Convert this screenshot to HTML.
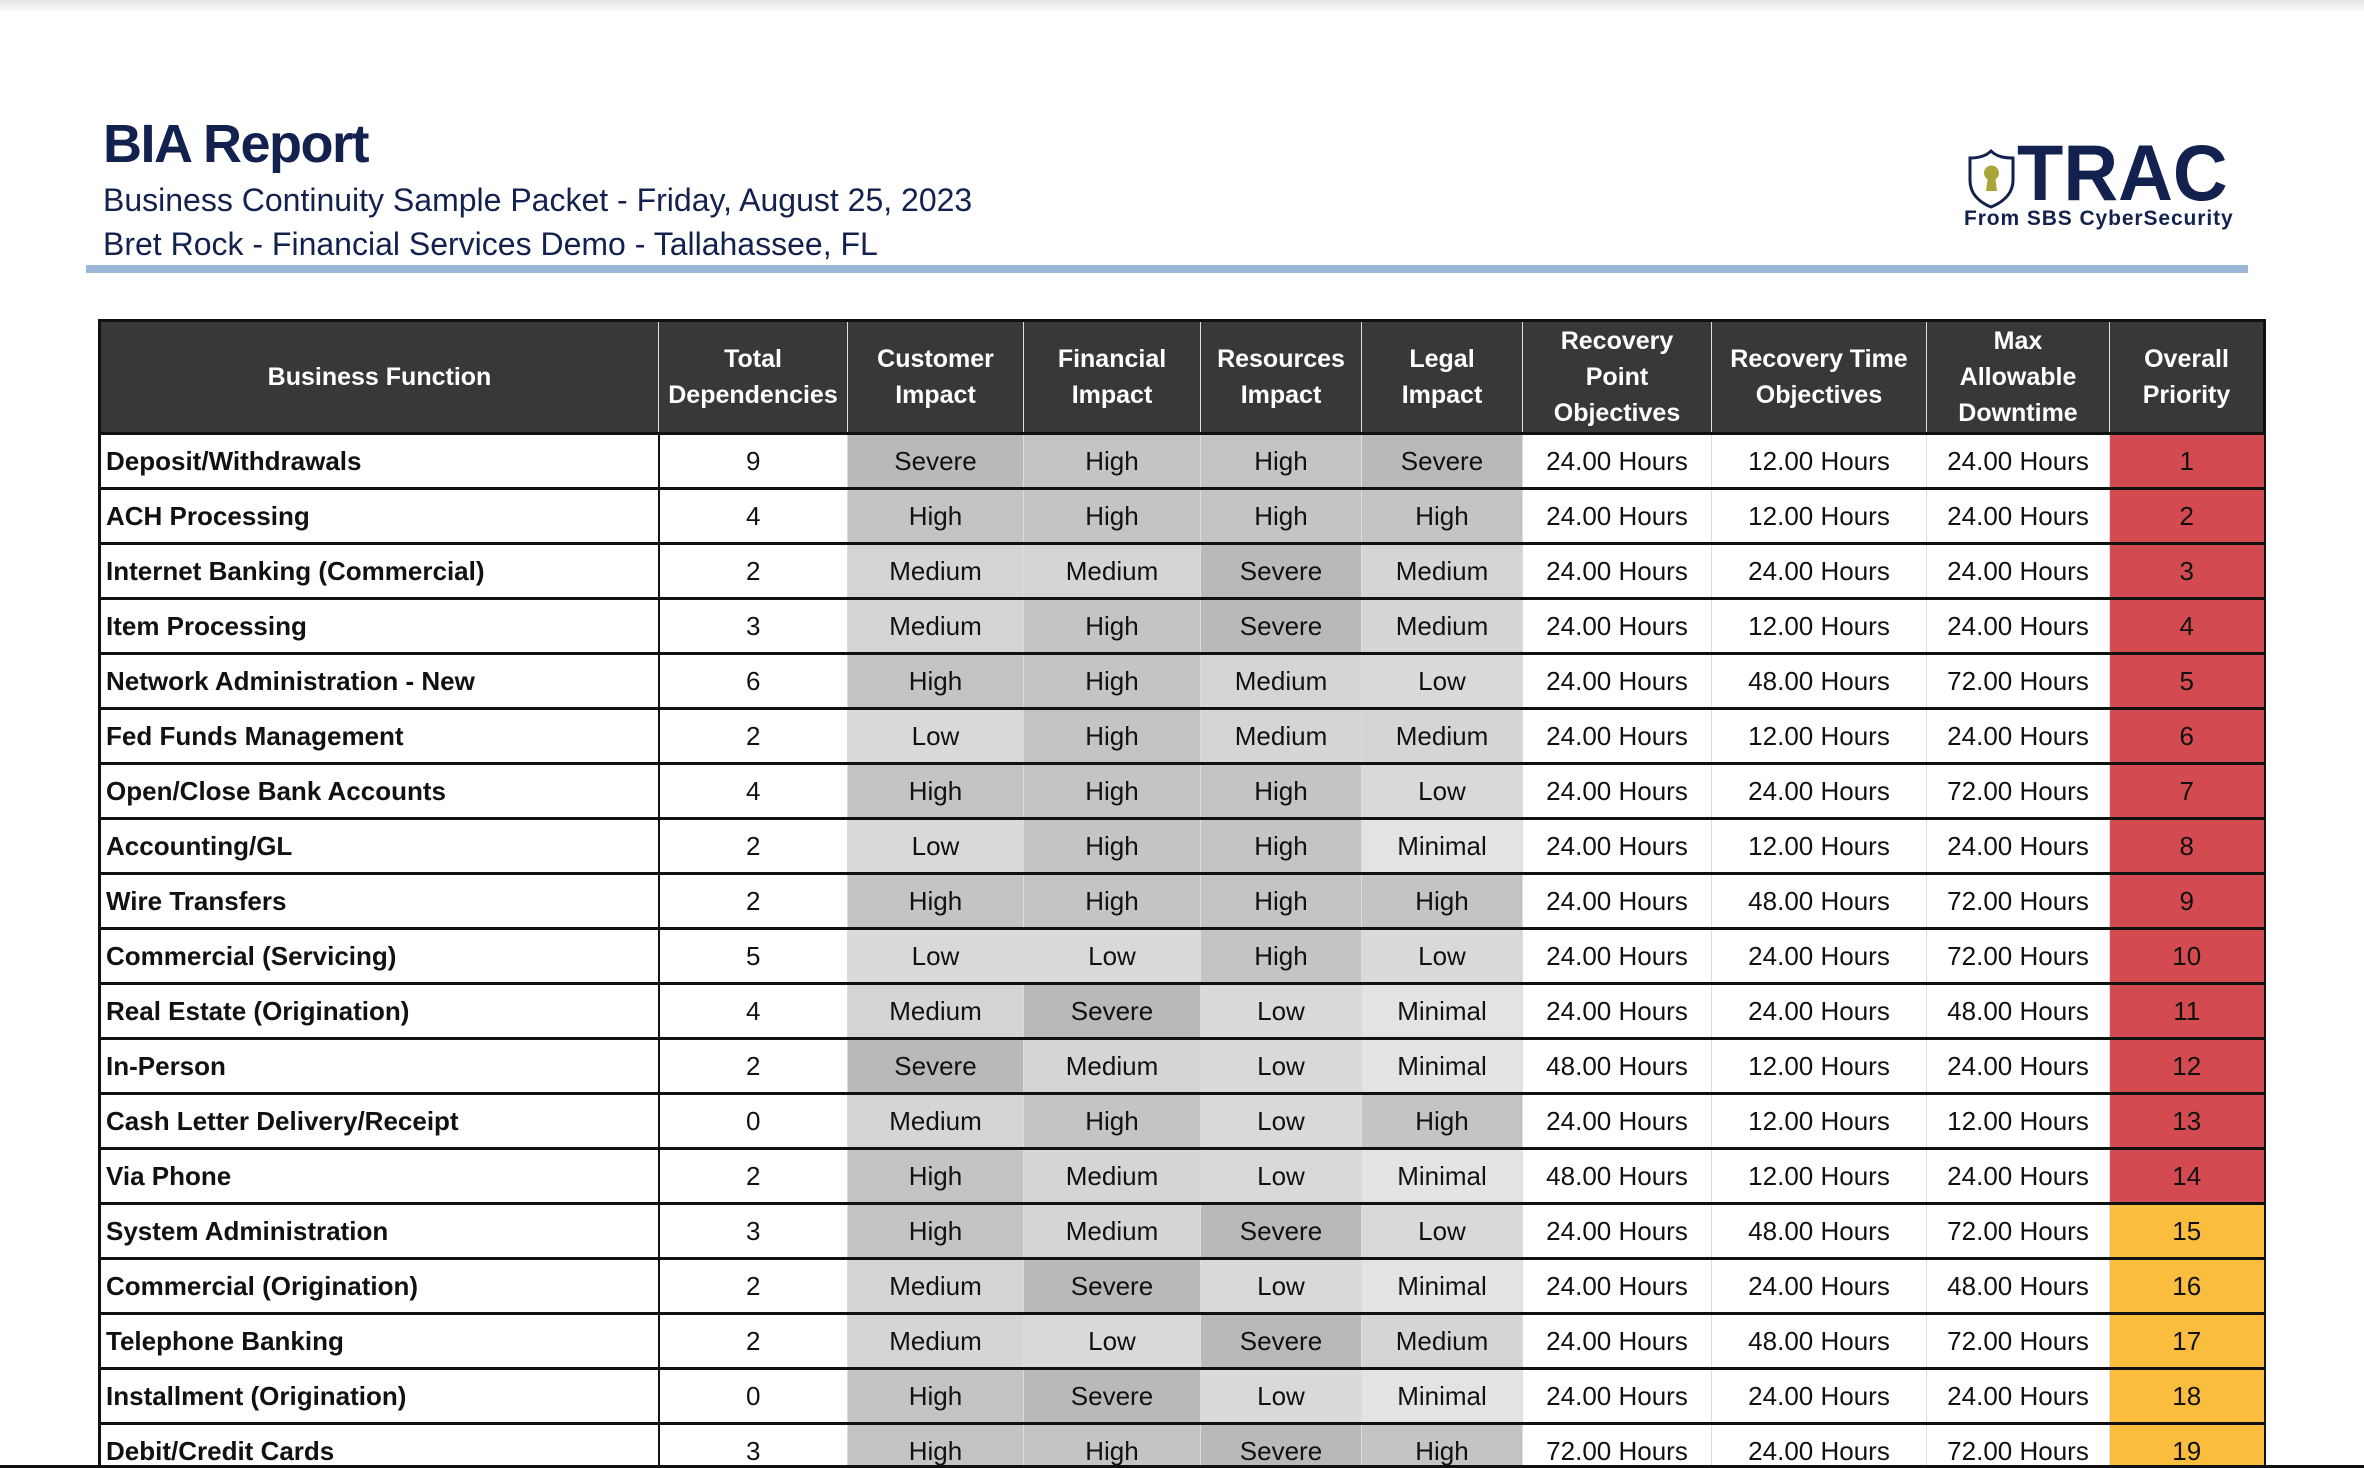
<!DOCTYPE html>
<html><head><meta charset="utf-8"><style>
html{margin:0;padding:0;width:2364px;height:1468px;overflow:hidden;}
body{margin:0;padding:0;width:2364px;height:1468px;overflow:hidden;background:#fff;position:relative;font-family:"Liberation Sans",sans-serif;}
.topsh{position:absolute;left:0;top:0;width:2364px;height:12px;background:linear-gradient(#e2e2e2,#fff);}
.t1{position:absolute;left:103px;top:117px;font-size:54px;font-weight:bold;color:#13214f;letter-spacing:-1.5px;line-height:1;}
.t2{position:absolute;left:103px;font-size:32px;color:#13214f;line-height:1;white-space:nowrap;}
.bar{position:absolute;left:86px;top:265px;width:2162px;height:8px;background:#9bb8d6;}
.logo{position:absolute;left:1967px;top:140px;}
.trac{position:absolute;left:2017px;top:133px;font-size:79px;font-weight:bold;color:#13214f;line-height:1;letter-spacing:0px;transform:scaleX(0.96);transform-origin:left top;}
.from{position:absolute;left:1964px;top:207px;font-size:21px;font-weight:bold;color:#13214f;letter-spacing:0.9px;white-space:nowrap;}
table{position:absolute;left:98px;top:319px;border-collapse:collapse;table-layout:fixed;width:2165px;font-size:26px;}
th{background:#383838;color:#fff;font-weight:bold;height:110px;border-left:1px solid #ddd;line-height:36px;padding:0 2px;font-size:25px;}
th:first-child{border-left:none}
thead tr{border:3px solid #111;}
td{height:52px;text-align:center;padding:0;border-left:1px solid #ddd;border-bottom:3px solid #111;white-space:nowrap;color:#111;}
td:first-child{text-align:left;font-weight:bold;padding-left:5px;border-left:3px solid #111;border-right:2px solid #111;}
td:last-child{border-right:2px solid #111;}
.S{background:#b9b9b9}.H{background:#c4c4c4}.M{background:#d5d5d5}.L{background:#d9d9d9}.N{background:#e3e3e3}
.r{background:#d34b50}.o{background:#fbbd3d}
.btm{position:absolute;left:0;top:1465px;width:2364px;height:3px;background:#111;}
</style></head><body>
<div class="topsh"></div>
<div class="t1">BIA Report</div>
<div class="t2" style="top:184px">Business Continuity Sample Packet - Friday, August 25, 2023</div>
<div class="t2" style="top:228px">Bret Rock - Financial Services Demo - Tallahassee, FL</div>
<div class="bar"></div>
<svg class="logo" width="52" height="70" viewBox="0 0 52 70">
<path d="M24 11 C18 17 10 18 3 18 L3 40 C3 55 14 63 24 67 C34 63 46 55 46 40 L46 18 C38 18 30 17 24 11 Z" fill="none" stroke="#13214f" stroke-width="3"/>
<circle cx="24.5" cy="33" r="7.5" fill="#aaa537"/>
<path d="M21 36 L28 36 L30 51 L19 51 Z" fill="#aaa537"/>
</svg>
<div class="trac">TRAC</div>
<div class="from">From SBS CyberSecurity</div>
<table>
<colgroup><col style="width:559px"><col style="width:189px"><col style="width:176px"><col style="width:177px"><col style="width:161px"><col style="width:161px"><col style="width:189px"><col style="width:215px"><col style="width:183px"><col style="width:155px"></colgroup>
<thead><tr><th>Business Function</th><th>Total<br>Dependencies</th><th>Customer<br>Impact</th><th>Financial<br>Impact</th><th>Resources<br>Impact</th><th>Legal<br>Impact</th><th>Recovery<br>Point<br>Objectives</th><th>Recovery Time<br>Objectives</th><th>Max<br>Allowable<br>Downtime</th><th>Overall<br>Priority</th></tr></thead>
<tbody>
<tr><td>Deposit/Withdrawals</td><td>9</td><td class="S">Severe</td><td class="H">High</td><td class="H">High</td><td class="S">Severe</td><td>24.00 Hours</td><td>12.00 Hours</td><td>24.00 Hours</td><td class="r">1</td></tr>
<tr><td>ACH Processing</td><td>4</td><td class="H">High</td><td class="H">High</td><td class="H">High</td><td class="H">High</td><td>24.00 Hours</td><td>12.00 Hours</td><td>24.00 Hours</td><td class="r">2</td></tr>
<tr><td>Internet Banking (Commercial)</td><td>2</td><td class="M">Medium</td><td class="M">Medium</td><td class="S">Severe</td><td class="M">Medium</td><td>24.00 Hours</td><td>24.00 Hours</td><td>24.00 Hours</td><td class="r">3</td></tr>
<tr><td>Item Processing</td><td>3</td><td class="M">Medium</td><td class="H">High</td><td class="S">Severe</td><td class="M">Medium</td><td>24.00 Hours</td><td>12.00 Hours</td><td>24.00 Hours</td><td class="r">4</td></tr>
<tr><td>Network Administration - New</td><td>6</td><td class="H">High</td><td class="H">High</td><td class="M">Medium</td><td class="L">Low</td><td>24.00 Hours</td><td>48.00 Hours</td><td>72.00 Hours</td><td class="r">5</td></tr>
<tr><td>Fed Funds Management</td><td>2</td><td class="L">Low</td><td class="H">High</td><td class="M">Medium</td><td class="M">Medium</td><td>24.00 Hours</td><td>12.00 Hours</td><td>24.00 Hours</td><td class="r">6</td></tr>
<tr><td>Open/Close Bank Accounts</td><td>4</td><td class="H">High</td><td class="H">High</td><td class="H">High</td><td class="L">Low</td><td>24.00 Hours</td><td>24.00 Hours</td><td>72.00 Hours</td><td class="r">7</td></tr>
<tr><td>Accounting/GL</td><td>2</td><td class="L">Low</td><td class="H">High</td><td class="H">High</td><td class="N">Minimal</td><td>24.00 Hours</td><td>12.00 Hours</td><td>24.00 Hours</td><td class="r">8</td></tr>
<tr><td>Wire Transfers</td><td>2</td><td class="H">High</td><td class="H">High</td><td class="H">High</td><td class="H">High</td><td>24.00 Hours</td><td>48.00 Hours</td><td>72.00 Hours</td><td class="r">9</td></tr>
<tr><td>Commercial (Servicing)</td><td>5</td><td class="L">Low</td><td class="L">Low</td><td class="H">High</td><td class="L">Low</td><td>24.00 Hours</td><td>24.00 Hours</td><td>72.00 Hours</td><td class="r">10</td></tr>
<tr><td>Real Estate (Origination)</td><td>4</td><td class="M">Medium</td><td class="S">Severe</td><td class="L">Low</td><td class="N">Minimal</td><td>24.00 Hours</td><td>24.00 Hours</td><td>48.00 Hours</td><td class="r">11</td></tr>
<tr><td>In-Person</td><td>2</td><td class="S">Severe</td><td class="M">Medium</td><td class="L">Low</td><td class="N">Minimal</td><td>48.00 Hours</td><td>12.00 Hours</td><td>24.00 Hours</td><td class="r">12</td></tr>
<tr><td>Cash Letter Delivery/Receipt</td><td>0</td><td class="M">Medium</td><td class="H">High</td><td class="L">Low</td><td class="H">High</td><td>24.00 Hours</td><td>12.00 Hours</td><td>12.00 Hours</td><td class="r">13</td></tr>
<tr><td>Via Phone</td><td>2</td><td class="H">High</td><td class="M">Medium</td><td class="L">Low</td><td class="N">Minimal</td><td>48.00 Hours</td><td>12.00 Hours</td><td>24.00 Hours</td><td class="r">14</td></tr>
<tr><td>System Administration</td><td>3</td><td class="H">High</td><td class="M">Medium</td><td class="S">Severe</td><td class="L">Low</td><td>24.00 Hours</td><td>48.00 Hours</td><td>72.00 Hours</td><td class="o">15</td></tr>
<tr><td>Commercial (Origination)</td><td>2</td><td class="M">Medium</td><td class="S">Severe</td><td class="L">Low</td><td class="N">Minimal</td><td>24.00 Hours</td><td>24.00 Hours</td><td>48.00 Hours</td><td class="o">16</td></tr>
<tr><td>Telephone Banking</td><td>2</td><td class="M">Medium</td><td class="L">Low</td><td class="S">Severe</td><td class="M">Medium</td><td>24.00 Hours</td><td>48.00 Hours</td><td>72.00 Hours</td><td class="o">17</td></tr>
<tr><td>Installment (Origination)</td><td>0</td><td class="H">High</td><td class="S">Severe</td><td class="L">Low</td><td class="N">Minimal</td><td>24.00 Hours</td><td>24.00 Hours</td><td>24.00 Hours</td><td class="o">18</td></tr>
<tr><td>Debit/Credit Cards</td><td>3</td><td class="H">High</td><td class="H">High</td><td class="S">Severe</td><td class="H">High</td><td>72.00 Hours</td><td>24.00 Hours</td><td>72.00 Hours</td><td class="o">19</td></tr>
</tbody></table>
<div class="btm"></div>
</body></html>
